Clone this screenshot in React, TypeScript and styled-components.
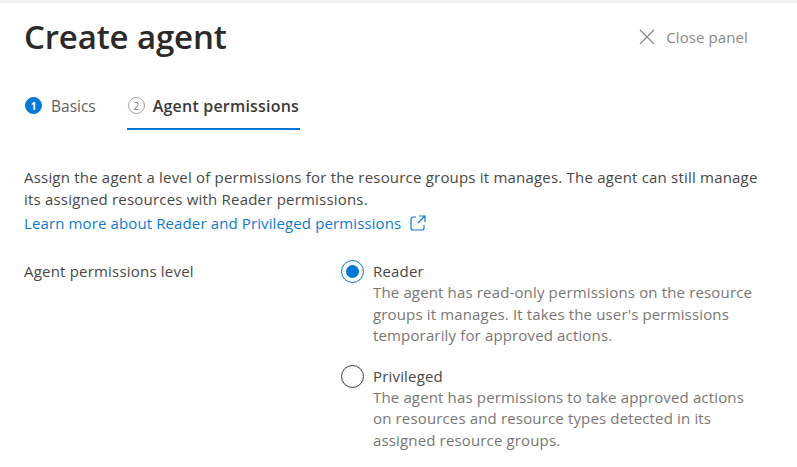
import styled, { createGlobalStyle } from "styled-components";

const GlobalStyle = createGlobalStyle`
  html, body {
    margin: 0;
    padding: 0;
    background: #fff;
    font-family: "Open Sans", "Noto Sans", sans-serif;
    color: #323130;
  }
`;

const Panel = styled.div`
  width: 797px;
  height: 467px;
  overflow: hidden;
  box-sizing: border-box;
  border-top: 3px solid #f0f0f0;
  padding: 0 24px;
`;

const Header = styled.header`
  display: flex;
  justify-content: space-between;
  align-items: flex-start;
  height: 73px;
`;

const Title = styled.h1`
  margin: 12px 0 0;
  font-size: 33px;
  line-height: 44px;
  font-weight: 600;
  color: #2b2a29;
  letter-spacing: -0.15px;
`;

const ClosePanel = styled.div`
  display: flex;
  align-items: center;
  gap: 11px;
  margin: 24px 25px 0 0;
  height: 20px;
  font-size: 15px;
  letter-spacing: 0.1px;
  color: #8a8886;
`;

const Tabs = styled.nav`
  display: flex;
  gap: 30px;
  height: 90px;
`;

const Tab = styled.div<{ $active?: boolean }>`
  display: flex;
  align-items: flex-start;
  gap: ${({ $active }) => ($active ? "8px" : "9px")};
  height: 32px;
  padding: 20px 1px 0 1px;
  font-size: ${({ $active }) => ($active ? "16px" : "15.5px")};
  line-height: 20px;
  letter-spacing: ${({ $active }) => ($active ? "0.2px" : "0")};
  font-weight: ${({ $active }) => ($active ? 600 : 400)};
  color: ${({ $active }) => ($active ? "#3b3a39" : "#605e5c")};
  border-bottom: 2px solid ${({ $active }) => ($active ? "#0078d4" : "transparent")};
`;

const StepBadge = styled.span<{ $filled?: boolean }>`
  display: flex;
  align-items: center;
  justify-content: center;
  box-sizing: border-box;
  width: 17px;
  height: 17px;
  margin-top: 1px;
  border-radius: 50%;
  font-size: 10px;
  line-height: 1;
  font-weight: ${({ $filled }) => ($filled ? 700 : 400)};
  letter-spacing: 0;
  color: ${({ $filled }) => ($filled ? "#fff" : "#797775")};
  background: ${({ $filled }) => ($filled ? "#0078d4" : "#fff")};
  border: 1px solid ${({ $filled }) => ($filled ? "#0078d4" : "#a19f9d")};
`;

const Intro = styled.p`
  margin: 0;
  width: 749px;
  font-size: 15px;
  line-height: 22px;
  letter-spacing: 0.2px;
  color: #4a4847;
`;

const LearnMore = styled.a`
  display: inline-flex;
  align-items: center;
  gap: 9px;
  margin-top: 2px;
  letter-spacing: 0.12px;
  color: #0f7ad0;
  text-decoration: none;
`;

const FieldRow = styled.div`
  display: grid;
  grid-template-columns: 317px 1fr;
  margin-top: 26px;
`;

const FieldLabel = styled.div`
  font-size: 15px;
  line-height: 22px;
  letter-spacing: 0.2px;
  color: #4a4847;
`;

const Options = styled.div`
  display: flex;
  flex-direction: column;
  gap: 18px;
`;

const Option = styled.div`
  display: grid;
  grid-template-columns: 23px 1fr;
  column-gap: 9px;
`;

const Radio = styled.span<{ $checked?: boolean }>`
  display: flex;
  align-items: center;
  justify-content: center;
  box-sizing: border-box;
  width: 23px;
  height: 23px;
  border-radius: 50%;
  border: 1.5px solid ${({ $checked }) => ($checked ? "#0078d4" : "#3b3a39")};
  &::after {
    content: "";
    display: ${({ $checked }) => ($checked ? "block" : "none")};
    width: 13px;
    height: 13px;
    border-radius: 50%;
    background: #0078d4;
  }
`;

const OptionTitle = styled.div`
  font-size: 15px;
  line-height: 22px;
  letter-spacing: 0.18px;
  color: #4a4847;
`;

const OptionText = styled.div`
  font-size: 15px;
  line-height: 21.5px;
  letter-spacing: 0.15px;
  color: #797775;
`;

const CloseIcon = () => (
  <svg width="16" height="16" viewBox="0 0 16 16" fill="none" stroke="#8a8886" strokeWidth="1.2">
    <path d="M1 1L15 15M15 1L1 15" />
  </svg>
);

const ExternalIcon = () => (
  <svg width="16" height="16" viewBox="0 0 16 16" fill="none" stroke="#0f7ad0" strokeWidth="1.2">
    <path d="M6 2H3a2 2 0 0 0-2 2v9a2 2 0 0 0 2 2h9a2 2 0 0 0 2-2v-3" />
    <path d="M9 1h6v6M15 1L8 8" />
  </svg>
);

const options = [
  {
    id: "reader",
    title: "Reader",
    checked: true,
    lines: [
      "The agent has read-only permissions on the resource",
      "groups it manages. It takes the user's permissions",
      "temporarily for approved actions.",
    ],
  },
  {
    id: "privileged",
    title: "Privileged",
    checked: false,
    lines: [
      "The agent has permissions to take approved actions",
      "on resources and resource types detected in its",
      "assigned resource groups.",
    ],
  },
];

const App = () => {
  return (
    <Panel>
      <GlobalStyle />
      <Header>
        <Title>Create agent</Title>
        <ClosePanel>
          <CloseIcon />
          Close panel
        </ClosePanel>
      </Header>

      <Tabs>
        <Tab>
          <StepBadge $filled>1</StepBadge>
          Basics
        </Tab>
        <Tab $active>
          <StepBadge>2</StepBadge>
          Agent permissions
        </Tab>
      </Tabs>

      <Intro>
        Assign the agent a level of permissions for the resource groups it manages. The agent can still manage
        <br />
        its assigned resources with Reader permissions.
        <br />
        <LearnMore href="#">
          Learn more about Reader and Privileged permissions
          <ExternalIcon />
        </LearnMore>
      </Intro>

      <FieldRow>
        <FieldLabel>Agent permissions level</FieldLabel>
        <Options>
          {options.map((option) => (
            <Option key={option.id}>
              <Radio $checked={option.checked} />
              <div>
                <OptionTitle>{option.title}</OptionTitle>
                <OptionText>
                  {option.lines.map((line) => (
                    <div key={line}>{line}</div>
                  ))}
                </OptionText>
              </div>
            </Option>
          ))}
        </Options>
      </FieldRow>
    </Panel>
  );
};

export default App;
